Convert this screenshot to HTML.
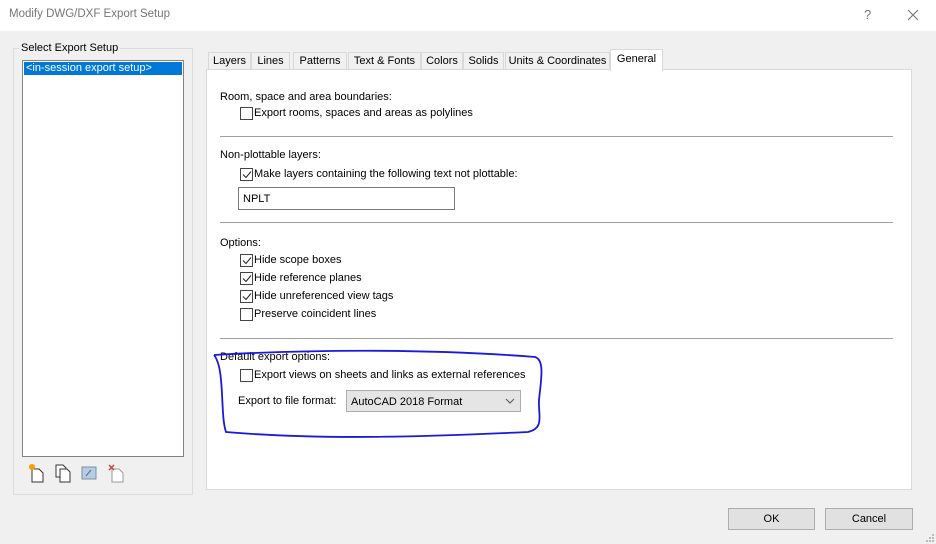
<!DOCTYPE html>
<html><head><meta charset="utf-8">
<style>
*{margin:0;padding:0;box-sizing:border-box}
body{width:936px;height:544px;background:#f0f0f0;font-family:"Liberation Sans",sans-serif;font-size:11px;color:#000;position:relative;overflow:hidden}
.a{position:absolute;white-space:nowrap}
.title{left:0;top:0;width:936px;height:31px;background:#fff}
.tab{position:absolute;top:52px;height:18px;border:1px solid #d9d9d9;border-bottom:none;background:#f0f0f0;text-align:center;line-height:16px;white-space:nowrap;font-size:11px}
.cb{position:absolute;width:13px;height:13px;border:1px solid #444;background:#fff}
.sep{position:absolute;left:220px;width:673px;height:1px;background:#a0a0a0}
.btn{position:absolute;top:508px;height:22px;background:#e1e1e1;border:1px solid #adadad;text-align:center;line-height:20px}
</style></head><body>
<div class="a title"></div>
<div class="a" style="left:9px;top:8px;font-size:11.5px;color:#777">Modify DWG/DXF Export Setup</div>
<div class="a" style="left:864px;top:7px;font-size:13px;color:#777">?</div>
<svg class="a" style="left:907px;top:9px" width="12" height="12"><path d="M1 1L11 11M11 1L1 11" stroke="#777" stroke-width="1.1"/></svg>

<div class="a" style="left:13px;top:48px;width:180px;height:447px;border:1px solid #dcdcdc"></div>
<div class="a" style="left:19px;top:42px;background:#f0f0f0;padding:0 2px">Select Export Setup</div>
<div class="a" style="left:22px;top:60px;width:162px;height:397px;border:1px solid #828282;background:#fff"></div>
<div class="a" style="left:24px;top:62px;width:158px;height:13px;background:#0078d7;color:#fff;line-height:13px;padding-left:2px">&lt;in-session export setup&gt;</div>
<svg class="a" style="left:28px;top:463px" width="100" height="20">
<path d="M4 6h7l4 4v9H4z" fill="#fff" stroke="#333"/><circle cx="4" cy="4" r="3" fill="#f90"/>
<path d="M28 2h7l3 3v9H28z" fill="#fff" stroke="#333"/><path d="M32 6h7l3 3v10H32z" fill="#fff" stroke="#333"/>
<rect x="54" y="4" width="14" height="12" fill="#b8cde0" stroke="#7a8fa6"/><path d="M58 13l5-6" stroke="#4a6fa0"/>
<path d="M84 6h7l4 4v9H84z" fill="#fff" stroke="#999"/><path d="M81 2l5 5M86 2l-5 5" stroke="#c44" stroke-width="1.5"/>
</svg>

<div class="tab" style="left:208px;width:43px">Layers</div>
<div class="tab" style="left:251px;width:39px">Lines</div>
<div class="tab" style="left:293px;width:54px">Patterns</div>
<div class="tab" style="left:348px;width:73px">Text &amp; Fonts</div>
<div class="tab" style="left:421px;width:42px">Colors</div>
<div class="tab" style="left:463px;width:41px">Solids</div>
<div class="tab" style="left:505px;width:105px">Units &amp; Coordinates</div>
<div class="a" style="left:206px;top:69px;width:706px;height:421px;background:#fff;border:1px solid #d9d9d9"></div>
<div class="tab" style="left:610px;top:49px;width:53px;height:22px;background:#fff;line-height:18px">General</div>

<div class="a" style="left:220px;top:91px">Room, space and area boundaries:</div>
<div class="cb" style="left:240px;top:107px"></div>
<div class="a" style="left:254px;top:107px">Export rooms, spaces and areas as polylines</div>
<div class="sep" style="top:136px"></div>

<div class="a" style="left:220px;top:149px">Non-plottable layers:</div>
<div class="cb" style="left:240px;top:168px"></div>
<div class="a" style="left:254px;top:168px">Make layers containing the following text not plottable:</div>
<div class="a" style="left:238px;top:187px;width:217px;height:23px;border:1px solid #7a7a7a;background:#fff;padding:5px 0 0 4px">NPLT</div>
<div class="sep" style="top:222px"></div>

<div class="a" style="left:220px;top:237px">Options:</div>
<div class="cb" style="left:240px;top:254px"></div><div class="a" style="left:254px;top:254px">Hide scope boxes</div>
<div class="cb" style="left:240px;top:272px"></div><div class="a" style="left:254px;top:272px">Hide reference planes</div>
<div class="cb" style="left:240px;top:290px"></div><div class="a" style="left:254px;top:290px">Hide unreferenced view tags</div>
<div class="cb" style="left:240px;top:308px"></div><div class="a" style="left:254px;top:308px">Preserve coincident lines</div>
<svg class="a" style="left:240px;top:168px" width="13" height="140">
<path d="M3 6.5l3 3 5-6" fill="none" stroke="#222" stroke-width="1"/>
<path d="M3 92.5l3 3 5-6" fill="none" stroke="#222" stroke-width="1"/>
<path d="M3 110.5l3 3 5-6" fill="none" stroke="#222" stroke-width="1"/>
<path d="M3 128.5l3 3 5-6" fill="none" stroke="#222" stroke-width="1"/>
</svg>
<div class="sep" style="top:338px"></div>

<div class="a" style="left:220px;top:351px">Default export options:</div>
<div class="cb" style="left:240px;top:369px"></div>
<div class="a" style="left:254px;top:369px">Export views on sheets and links as external references</div>
<div class="a" style="left:238px;top:395px">Export to file format:</div>
<div class="a" style="left:346px;top:390px;width:175px;height:22px;background:#e5e5e5;border:1px solid #adadad;padding:5px 0 0 4px">AutoCAD 2018 Format</div>
<svg class="a" style="left:505px;top:397px" width="10" height="8"><path d="M1 2l4 4 4-4" fill="none" stroke="#555"/></svg>

<svg class="a" style="left:0;top:0" width="936" height="544">
<path d="M214 355 C300 350 420 348 535 357 C545 360 541 380 539 400 C538 415 545 428 528 432 C420 437 320 440 226 432 C222 420 223 400 221 380 C220 368 218 360 214 355" fill="none" stroke="#1a1adb" stroke-width="1.8"/>
</svg>

<div class="btn" style="left:728px;width:87px">OK</div>
<div class="btn" style="left:825px;width:88px">Cancel</div>
<svg class="a" style="left:926px;top:534px" width="9" height="9"><g fill="#bbb"><rect x="6" y="0" width="2" height="2"/><rect x="3" y="3" width="2" height="2"/><rect x="6" y="3" width="2" height="2"/><rect x="0" y="6" width="2" height="2"/><rect x="3" y="6" width="2" height="2"/><rect x="6" y="6" width="2" height="2"/></g></svg>
</body></html>
